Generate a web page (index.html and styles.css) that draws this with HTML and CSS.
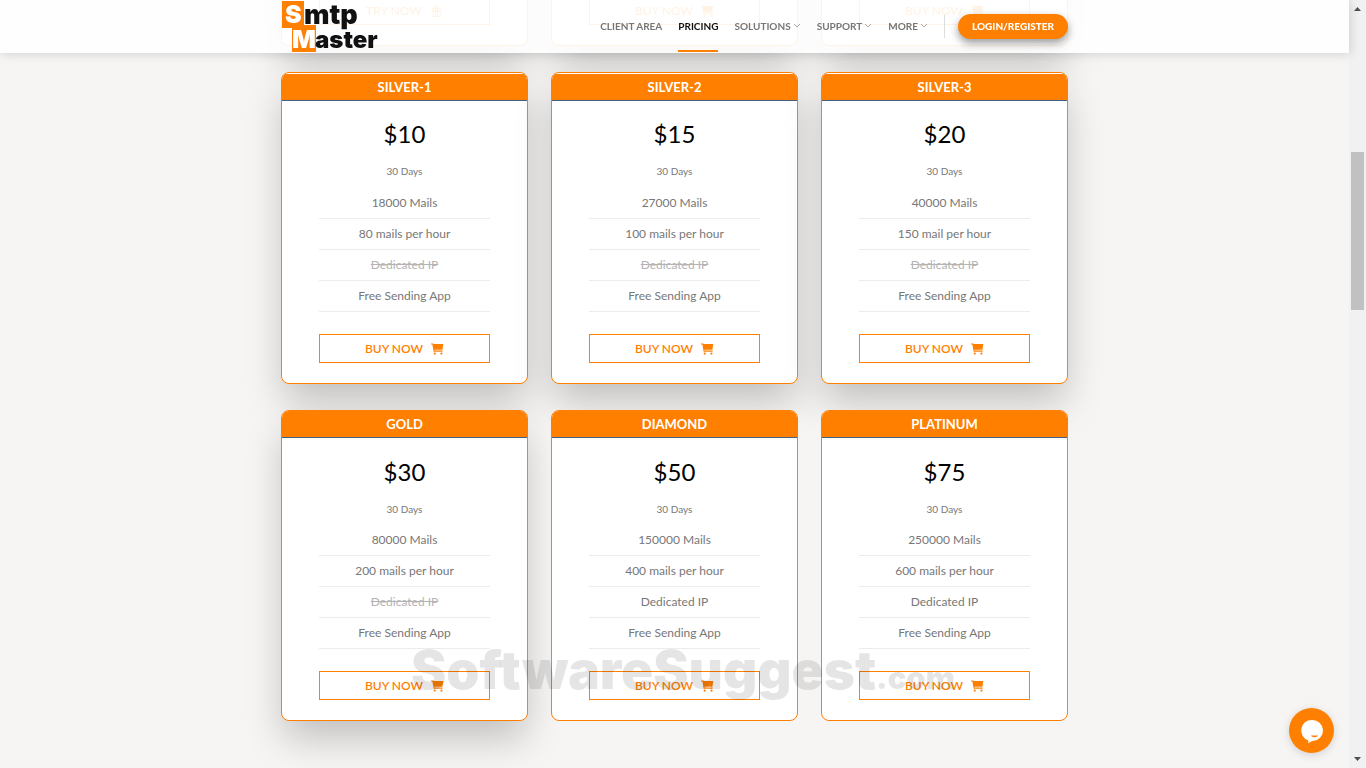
FILE: index.html
```html
<!DOCTYPE html>
<html lang="en">
<head>
    <meta charset="UTF-8">
    <meta name="viewport" content="width=device-width, initial-scale=1.0">
    <title>Smtp Master - Pricing</title>
    <link rel="stylesheet" href="styles.css">
</head>
<body>

    <svg class="sprite" aria-hidden="true">
        <symbol id="cart" viewBox="0 0 14 13">
            <path d="M0 .5h2.600l.4.700h10.300l-1 6H3.600l.2 1h8.700v1.200H2.800L1.500 1.500H0z"/>
            <circle cx="4" cy="11.500" r="1.200"/>
            <circle cx="11.300" cy="11.500" r="1.200"/>
        </symbol>
        <symbol id="gift" viewBox="0 0 12 13">
            <path d="M1 4h10v2.500H1zM2 6.500h8v6H2zM5 4v8.500M7 4v8.500M6 4C3 4 2 .8 4 .8c1.300 0 2 2 2 3.200 0-1.200.7-3.200 2-3.200 2 0 1 3.200-2 3.200" fill="none" stroke="currentColor"/>
        </symbol>
        <symbol id="chevron" viewBox="0 0 8 6">
            <path d="M1 1l3 3 3-3" fill="none" stroke="currentColor"/>
        </symbol>
    </svg>

    <header class="header">
        <div class="header-inner">
            <a class="logo" href="#" aria-label="Smtp Master">
                <svg width="98" height="53" viewBox="0 0 98 53">
                    <rect x="1" y="1" width="22" height="27" fill="#ff7f00"/>
                    <rect x="1" y="28" width="10" height="14" fill="#fff"/>
                    <rect x="11" y="25" width="24" height="27" fill="#ff7f00"/>
                    <text class="logo-cap" x="4" y="23">S</text>
                    <text class="logo-cap" x="11" y="48">M</text>
                    <text class="logo-top" x="23" y="24">mtp</text>
                    <text class="logo-bottom" x="34" y="48">aster</text>
                </svg>
            </a>
            <nav class="nav">
                <a href="#">CLIENT AREA</a>
                <a class="active" href="#">PRICING</a>
                <a href="#">SOLUTIONS<svg class="chevron"><use href="#chevron"/></svg></a>
                <a href="#">SUPPORT<svg class="chevron"><use href="#chevron"/></svg></a>
                <a href="#">MORE<svg class="chevron"><use href="#chevron"/></svg></a>
                <span class="divider"></span>
                <a class="login" href="#">LOGIN/REGISTER</a>
            </nav>
        </div>
    </header>

    <main class="page">
        <div class="plans">
            <section class="card shadow tail">
                <button class="buy">TRY NOW <svg class="icon"><use href="#gift"/></svg></button>
            </section>
            <section class="card shadow tail">
                <button class="buy">BUY NOW <svg class="icon"><use href="#cart"/></svg></button>
            </section>
            <section class="card shadow tail">
                <button class="buy">BUY NOW <svg class="icon"><use href="#cart"/></svg></button>
            </section>

            <section class="card shadow">
                <h2 class="lined">SILVER-1</h2>
                <p class="price">$10</p>
                <p class="period">30 Days</p>
                <ul>
                    <li>18000 Mails</li>
                    <li>80 mails per hour</li>
                    <li class="off">Dedicated IP</li>
                    <li>Free Sending App</li>
                </ul>
                <button class="buy">BUY NOW <svg class="icon"><use href="#cart"/></svg></button>
            </section>
            <section class="card shadow">
                <h2 class="lined">SILVER-2</h2>
                <p class="price">$15</p>
                <p class="period">30 Days</p>
                <ul>
                    <li>27000 Mails</li>
                    <li>100 mails per hour</li>
                    <li class="off">Dedicated IP</li>
                    <li>Free Sending App</li>
                </ul>
                <button class="buy">BUY NOW <svg class="icon"><use href="#cart"/></svg></button>
            </section>
            <section class="card shadow">
                <h2 class="lined">SILVER-3</h2>
                <p class="price">$20</p>
                <p class="period">30 Days</p>
                <ul>
                    <li>40000 Mails</li>
                    <li>150 mail per hour</li>
                    <li class="off">Dedicated IP</li>
                    <li>Free Sending App</li>
                </ul>
                <button class="buy">BUY NOW <svg class="icon"><use href="#cart"/></svg></button>
            </section>

            <section class="card shadow">
                <h2>GOLD</h2>
                <p class="price">$30</p>
                <p class="period">30 Days</p>
                <ul>
                    <li>80000 Mails</li>
                    <li>200 mails per hour</li>
                    <li class="off">Dedicated IP</li>
                    <li>Free Sending App</li>
                </ul>
                <button class="buy">BUY NOW <svg class="icon"><use href="#cart"/></svg></button>
            </section>
            <section class="card">
                <h2>DIAMOND</h2>
                <p class="price">$50</p>
                <p class="period">30 Days</p>
                <ul>
                    <li>150000 Mails</li>
                    <li>400 mails per hour</li>
                    <li>Dedicated IP</li>
                    <li>Free Sending App</li>
                </ul>
                <button class="buy">BUY NOW <svg class="icon"><use href="#cart"/></svg></button>
            </section>
            <section class="card">
                <h2>PLATINUM</h2>
                <p class="price">$75</p>
                <p class="period">30 Days</p>
                <ul>
                    <li>250000 Mails</li>
                    <li>600 mails per hour</li>
                    <li>Dedicated IP</li>
                    <li>Free Sending App</li>
                </ul>
                <button class="buy">BUY NOW <svg class="icon"><use href="#cart"/></svg></button>
            </section>
        </div>
    </main>

    <div class="watermark">SoftwareSuggest<span>.com</span></div>

    <button class="chat" aria-label="Chat">
        <svg width="45" height="45" viewBox="0 0 45 45">
            <path d="M23 12a10.500 10.500 0 0 1 1 21c-2 .2-3 1.500-5 2.200l.5-2.700A10.500 10.500 0 0 1 23 12z" fill="#fff"/>
            <path d="M22 27.500h7c-.5 2-6 2.500-7 0z" fill="#ff7f00"/>
        </svg>
    </button>

    <div class="scrollbar">
        <svg width="17" height="17"><path d="M5 11h7L8.500 7z" fill="#505050"/></svg>
        <div class="thumb"></div>
        <svg width="17" height="17"><path d="M5 6h7l-3.500 4z" fill="#505050"/></svg>
    </div>

</body>
</html>
```
FILE: styles.css
```css
* {
    box-sizing: border-box;
}
body {
    margin: 0;
    height: 100vh;
    overflow: hidden;
    padding-right: 17px;
    font-family: Lato, sans-serif;
    font-size: 12px;
    color: #777;
    background-color: #f6f5f4;
}
.sprite {
    display: none;
}
a {
    color: inherit;
    text-decoration: none;
}

/* header */
.header {
    position: fixed;
    z-index: 2;
    top: 0;
    left: 0;
    right: 17px;
    height: 53px;
    background-color: rgba(255, 255, 255, 0.9);
    box-shadow: 1px 1px 10px rgba(0, 0, 0, 0.15);
}
.header-inner {
    display: flex;
    justify-content: space-between;
    max-width: 787px;
    margin: 0 auto;
}
.logo svg {
    display: block;
}
.logo text {
    font-family: Inter, sans-serif;
    font-weight: 900;
}
.logo .logo-cap {
    font-size: 25px;
    fill: #fff;
}
.logo-top {
    font-size: 27px;
    fill: #111;
}
.logo-bottom {
    font-size: 24px;
    fill: #111;
}
.nav {
    display: flex;
    align-items: center;
    gap: 16px;
    height: 52px;
    font-size: 10px;
    font-weight: 700;
}
.nav a {
    display: flex;
    align-items: center;
    height: 52px;
}
.nav .active {
    color: #111;
    border-bottom: 2px solid #ff7f00;
    border-top: 2px solid transparent;
}
.chevron {
    width: 8px;
    height: 6px;
    margin-left: 2px;
    color: #aaa;
}
.divider {
    width: 1px;
    height: 23px;
    background-color: #ddd;
}
.nav .login {
    height: 25px;
    padding: 0 14px;
    margin-left: -3px;
    font-weight: 900;
    color: #fff;
    background-color: #ff7f00;
    border-radius: 99px;
    box-shadow: 0 4px 8px rgba(0, 0, 0, 0.4);
}

/* plans */
.plans {
    display: grid;
    grid-template-columns: repeat(3, 1fr);
    gap: 26px 23px;
    max-width: 787px;
    margin: -266px auto 0;
}
.card {
    display: flex;
    flex-direction: column;
    align-self: start;
    padding-bottom: 20px;
    text-align: center;
    background-color: #fff;
    border: 1px solid #ff7f00;
    border-radius: 8px;
    overflow: hidden;
}
.shadow {
    box-shadow: 0 20px 38px -3px rgba(0, 0, 0, 0.22);
}
.tail {
    height: 312px;
    justify-content: flex-end;
}
.card h2 {
    margin: 0;
    font-size: 13px;
    line-height: 26px;
    color: #fff;
    background-color: #ff7f00;
    border-bottom: 1px solid #446084;
}
.card .lined {
    border-top: 1px solid #fff;
}
.card p {
    margin: 0;
}
.card .price {
    margin-top: 19px;
    font-size: 24px;
    line-height: 30px;
    color: #000;
}
.card .lined + .price {
    margin-top: 18px;
}
.card .period {
    margin-top: 12px;
    font-size: 10px;
    line-height: 20px;
}
.card ul {
    list-style: none;
    margin: 6px 37px 22px;
    padding: 0;
}
.card li {
    line-height: 30px;
    border-bottom: 1px solid #ececec;
}
.lined ~ ul li:first-child {
    line-height: 31px;
}
.card .off {
    color: #b4b4b4;
    text-decoration: line-through;
}
.buy {
    display: flex;
    align-items: center;
    justify-content: center;
    gap: 8px;
    height: 29px;
    margin: 0 37px;
    font-family: inherit;
    font-size: 12px;
    font-weight: 600;
    color: #ff7f00;
    background: none;
    border: 1px solid #ff7f00;
    cursor: pointer;
}
.buy:hover {
    color: #fff;
    background-color: #ff7f00;
}
.icon {
    width: 13px;
    height: 12px;
    fill: currentColor;
}

.watermark {
    position: fixed;
    z-index: 1;
    left: 0;
    right: 0;
    top: 640px;
    text-align: center;
    font-family: Inter, sans-serif;
    font-size: 53px;
    line-height: 60px;
    font-weight: 900;
    color: rgba(0, 0, 0, 0.1);
    pointer-events: none;
}
.watermark span {
    font-size: 31px;
}
.chat {
    position: fixed;
    right: 32px;
    bottom: 15px;
    width: 45px;
    height: 45px;
    padding: 0;
    border: none;
    border-radius: 50%;
    background-color: #ff7f00;
    box-shadow: 0 2px 8px rgba(0, 0, 0, 0.15);
    cursor: pointer;
}

/* scrollbar */
.scrollbar {
    position: fixed;
    top: 0;
    right: 0;
    bottom: 0;
    width: 17px;
    display: flex;
    flex-direction: column;
    justify-content: space-between;
    background-color: #f1f1f1;
}
.thumb {
    height: 158px;
    margin: 135px 2px auto;
    background-color: #c1c1c1;
}
```
